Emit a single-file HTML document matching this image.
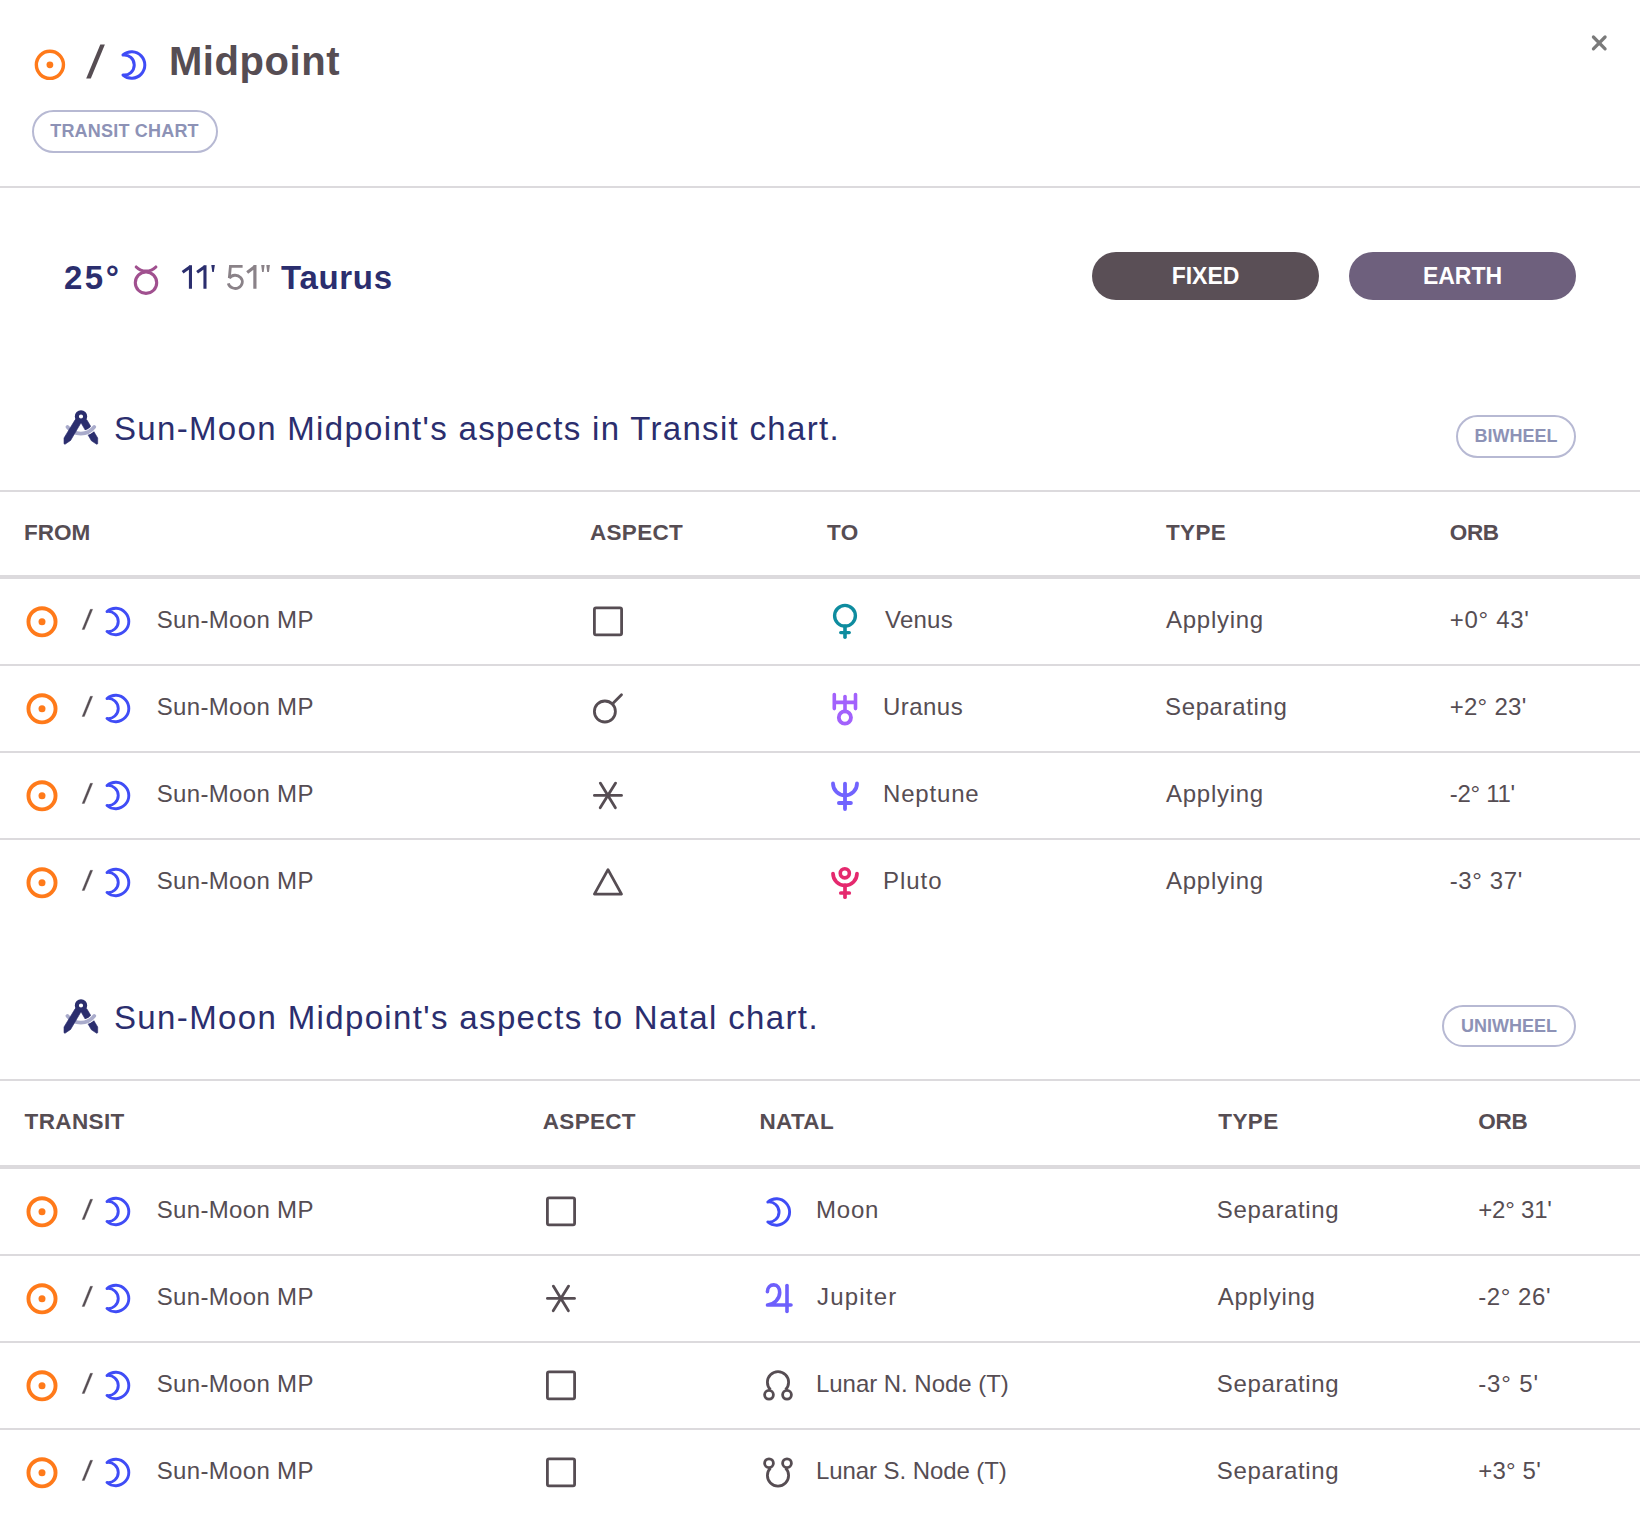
<!DOCTYPE html>
<html><head><meta charset="utf-8">
<style>
html,body{margin:0;padding:0;background:#fff;}
body{width:1640px;height:1516px;position:relative;overflow:hidden;font-family:"Liberation Sans",sans-serif;color:#564d53;}
.a{position:absolute;}
.hr{position:absolute;left:0;width:1640px;height:2px;background:#dcdadd;}
.hr4{position:absolute;left:0;width:1640px;height:4px;background:#dcdadd;}
.pill{position:absolute;box-sizing:border-box;border:2px solid #b7b9d3;border-radius:30px;color:#8d92b6;font-weight:bold;font-size:18px;text-align:center;}
.btn{position:absolute;border-radius:30px;color:#fff;font-weight:bold;font-size:23px;text-align:center;height:48px;line-height:48px;}
.th{position:absolute;font-weight:bold;font-size:22.5px;letter-spacing:0.2px;color:#564d53;white-space:nowrap;}
.td{position:absolute;font-size:24px;letter-spacing:0.3px;color:#564d53;white-space:nowrap;}
.h2{position:absolute;font-size:33px;letter-spacing:1.3px;color:#2b2e6e;white-space:nowrap;}
svg{position:absolute;overflow:visible;}
</style></head><body>

<!-- header -->
<svg class="a" style="left:0;top:0" width="400" height="100">
  <circle cx="49.9" cy="64.85" r="13.55" fill="none" stroke="#ff7a1a" stroke-width="3.4"/>
  <circle cx="49.9" cy="64.85" r="3.4" fill="#ff7a1a"/>
  <path d="M86.2,78.5 L90.8,78.5 L104.9,44.4 L100.3,44.4 Z" fill="#564d53"/>
  <path d="M123,55 A13.2,13.2 0 1 1 123,75 A10.07,10.07 0 1 0 123,55 Z" fill="none" stroke="#3f4cf6" stroke-width="3" stroke-linejoin="round"/>
</svg>
<div class="a" style="left:169px;top:35px;font-size:40px;font-weight:bold;color:#564d53;line-height:52px;letter-spacing:0.55px">Midpoint</div>
<div class="pill" style="left:32px;top:110px;width:186px;height:43px;line-height:39px;letter-spacing:0.2px;text-indent:-1px">TRANSIT CHART</div>
<svg class="a" style="left:1590px;top:34px" width="20" height="20">
  <path d="M3.4,3 L15.1,14.8 M15.1,3 L3.4,14.8" stroke="#7a7a7a" stroke-width="3.2" stroke-linecap="round"/>
</svg>
<div class="hr" style="top:186px"></div>

<!-- position line -->
<div class="a" style="left:64px;top:261px;font-size:33px;line-height:34px;color:#2b2e6e;white-space:nowrap;font-weight:bold;letter-spacing:2.5px">25°</div>
<svg class="a" style="left:0;top:0" width="300" height="300">
  <g fill="none" stroke="#2b2e6e" stroke-width="3.1">
    <path d="M190.45,265.2 V288.75 M191,266.2 L182.6,272.3"/>
    <path d="M204.97,265.2 V288.75 M205.5,266.2 L197.1,272.3"/>
  </g>
  <path d="M211.3,265 L214.85,265 L213.8,272 L212.3,272 Z" fill="#2b2e6e"/>
  <g fill="none" stroke="#8a8288" stroke-width="2.8">
    <path d="M242.6,266.4 L230.4,266.4 L229.3,278.2"/>
    <path d="M229.3,278.2 A7.1,6.6 0 1 1 228.3,283.3"/>
    <path d="M254.9,265.1 V288.8 M255.4,266.3 L247.2,272.6" stroke-width="3.2"/>
  </g>
  <path d="M261.2,265 L264.6,265 L263.7,271.9 L262.1,271.9 Z M266.3,265 L269.9,265 L269,271.9 L267.2,271.9 Z" fill="#8a8288"/>
</svg>
<div class="a" style="left:281px;top:261px;font-size:33px;line-height:34px;color:#2b2e6e;white-space:nowrap;font-weight:bold;letter-spacing:0.7px">Taurus</div>
<svg class="a" style="left:130px;top:262px" width="34" height="36">
  <circle cx="16" cy="20.7" r="10.7" fill="none" stroke="#a0508f" stroke-width="3.1"/>
  <path d="M6.2,5 A13.8,13.8 0 0 0 25.9,5" fill="none" stroke="#a0508f" stroke-width="3.1" stroke-linecap="round"/>
</svg>
<div class="btn" style="left:1092px;top:252px;width:227px;background:#5a4f56;">FIXED</div>
<div class="btn" style="left:1349px;top:252px;width:227px;background:#6e607d;">EARTH</div>

<svg style="left:50px;top:400px" width="60" height="60"><path d="M25.1,19.8 L31,19.6 L36.8,19.8 L47.7,38 L47.7,43.8 L46.7,44.3 L41.4,40.8 L31,22.8 Z" fill="#2b2e6e" stroke="#2b2e6e" stroke-width="0.6" stroke-linejoin="round"/><path d="M17.4,26.9 A16.85,16.85 0 0 0 44.3,26.9" fill="none" stroke="#fff" stroke-width="5.6" stroke-linecap="round"/><path d="M17.4,26.9 A16.85,16.85 0 0 0 44.3,26.9" fill="none" stroke="#a9abcb" stroke-width="3.7" stroke-linecap="round"/><path d="M25.1,19.8 L31,19.6 L31,22.8 L20.6,40.4 L15,44.3 L14,43.8 L14,38 Z" fill="#2b2e6e" stroke="#2b2e6e" stroke-width="0.6" stroke-linejoin="round"/><circle cx="31" cy="16.5" r="4.15" fill="none" stroke="#2b2e6e" stroke-width="4.1"/></svg>
<div class="h2" style="left:114px;top:409px;line-height:40px;letter-spacing:1.32px">Sun-Moon Midpoint's aspects in Transit chart.</div>
<div class="pill" style="left:1456px;top:415px;width:120px;height:43px;line-height:39px">BIWHEEL</div>
<div class="hr" style="top:490px"></div>
<div class="th" style="left:24.0px;top:520px;line-height:26px;letter-spacing:0.0px">FROM</div>
<div class="th" style="left:590.0px;top:520px;line-height:26px;letter-spacing:0.3px">ASPECT</div>
<div class="th" style="left:827.1px;top:520px;line-height:26px;letter-spacing:0.2px">TO</div>
<div class="th" style="left:1165.9px;top:520px;line-height:26px;letter-spacing:0.37px">TYPE</div>
<div class="th" style="left:1449.7px;top:520px;line-height:26px;letter-spacing:-0.3px">ORB</div>
<div class="hr4" style="top:575px"></div>
<svg style="left:0;top:601px" width="150" height="40">
  <circle cx="42" cy="20.8" r="13.55" fill="none" stroke="#ff7a1a" stroke-width="3.9"/>
  <circle cx="42" cy="20.8" r="3.5" fill="#ff7a1a"/>
  <path d="M82.1,28.5 L84.4,28.5 L92.7,8.3 L90.3,8.3 Z" fill="#564d53" stroke="#564d53" stroke-width="0.3" stroke-linejoin="round"/>
  <path d="M107.00,10.50 A13.2,13.2 0 1 1 107.00,30.50 A10.07,10.07 0 1 0 107.00,10.50 Z" fill="none" stroke="#3f4cf6" stroke-width="2.9" stroke-linejoin="round"/>
</svg><div class="td" style="left:156.7px;top:606px;line-height:28px;letter-spacing:0.33px">Sun-Moon MP</div>
<svg style="left:593px;top:606px" width="31" height="31"><rect x="1.4" y="1.9" width="27.2" height="27" rx="1.6" fill="none" stroke="#564d53" stroke-width="2.8"/></svg>
<svg style="left:825px;top:601px" width="40" height="40"><circle cx="20" cy="14.8" r="10.4" fill="none" stroke="#0e8c9f" stroke-width="3.4"/><line x1="20" y1="25" x2="20" y2="36.2" stroke="#0e8c9f" stroke-width="3.6" stroke-linecap="round"/><line x1="15.7" y1="31.6" x2="24.3" y2="31.6" stroke="#0e8c9f" stroke-width="3.3" stroke-linecap="round"/></svg>
<div class="td" style="left:885.0px;top:606px;line-height:28px;letter-spacing:0.23px">Venus</div>
<div class="td" style="left:1166.0px;top:606px;line-height:28px;letter-spacing:0.73px">Applying</div>
<div class="td" style="left:1449.7px;top:606px;line-height:28px;letter-spacing:0.72px">+0° 43'</div>
<div class="hr" style="top:664px"></div>
<svg style="left:0;top:688px" width="150" height="40">
  <circle cx="42" cy="20.8" r="13.55" fill="none" stroke="#ff7a1a" stroke-width="3.9"/>
  <circle cx="42" cy="20.8" r="3.5" fill="#ff7a1a"/>
  <path d="M82.1,28.5 L84.4,28.5 L92.7,8.3 L90.3,8.3 Z" fill="#564d53" stroke="#564d53" stroke-width="0.3" stroke-linejoin="round"/>
  <path d="M107.00,10.50 A13.2,13.2 0 1 1 107.00,30.50 A10.07,10.07 0 1 0 107.00,10.50 Z" fill="none" stroke="#3f4cf6" stroke-width="2.9" stroke-linejoin="round"/>
</svg><div class="td" style="left:156.7px;top:693px;line-height:28px;letter-spacing:0.33px">Sun-Moon MP</div>
<svg style="left:593px;top:693px" width="31" height="31"><circle cx="11.9" cy="18.5" r="10.5" fill="none" stroke="#564d53" stroke-width="2.8"/><line x1="19.3" y1="11.1" x2="28.5" y2="1.8" stroke="#564d53" stroke-width="2.8" stroke-linecap="round"/></svg>
<svg style="left:825px;top:688px" width="40" height="40"><path d="M9.3,6.5 V20.6 M30.5,6.5 V20.6 M9.3,14.4 H30.5" fill="none" stroke="#a261fc" stroke-width="3.6" stroke-linecap="round"/><line x1="20" y1="8.6" x2="20" y2="23.5" stroke="#a261fc" stroke-width="3.6" stroke-linecap="round"/><circle cx="19.9" cy="29.5" r="6.07" fill="none" stroke="#a261fc" stroke-width="3.85"/></svg>
<div class="td" style="left:883.0px;top:693px;line-height:28px;letter-spacing:0.46px">Uranus</div>
<div class="td" style="left:1165.0px;top:693px;line-height:28px;letter-spacing:0.64px">Separating</div>
<div class="td" style="left:1449.7px;top:693px;line-height:28px;letter-spacing:0.28px">+2° 23'</div>
<div class="hr" style="top:751px"></div>
<svg style="left:0;top:775px" width="150" height="40">
  <circle cx="42" cy="20.8" r="13.55" fill="none" stroke="#ff7a1a" stroke-width="3.9"/>
  <circle cx="42" cy="20.8" r="3.5" fill="#ff7a1a"/>
  <path d="M82.1,28.5 L84.4,28.5 L92.7,8.3 L90.3,8.3 Z" fill="#564d53" stroke="#564d53" stroke-width="0.3" stroke-linejoin="round"/>
  <path d="M107.00,10.50 A13.2,13.2 0 1 1 107.00,30.50 A10.07,10.07 0 1 0 107.00,10.50 Z" fill="none" stroke="#3f4cf6" stroke-width="2.9" stroke-linejoin="round"/>
</svg><div class="td" style="left:156.7px;top:780px;line-height:28px;letter-spacing:0.33px">Sun-Moon MP</div>
<svg style="left:593px;top:780px" width="31" height="31"><line x1="1.4" y1="15.4" x2="28.5" y2="15.4" stroke="#564d53" stroke-width="2.8" stroke-linecap="round"/><line x1="7.3" y1="3.1" x2="22.4" y2="27.7" stroke="#564d53" stroke-width="2.8" stroke-linecap="round"/><line x1="22.6" y1="3.1" x2="7.2" y2="27.8" stroke="#564d53" stroke-width="2.8" stroke-linecap="round"/></svg>
<svg style="left:825px;top:775px" width="40" height="40"><path d="M8,8.4 A12,12 0 0 0 32,8.4" fill="none" stroke="#7163fe" stroke-width="3.8" stroke-linecap="round"/><line x1="20" y1="8.6" x2="20" y2="34" stroke="#7163fe" stroke-width="3.8" stroke-linecap="round"/><line x1="13.9" y1="28" x2="25.9" y2="28" stroke="#7163fe" stroke-width="3.8" stroke-linecap="round"/></svg>
<div class="td" style="left:883.0px;top:780px;line-height:28px;letter-spacing:0.83px">Neptune</div>
<div class="td" style="left:1166.0px;top:780px;line-height:28px;letter-spacing:0.73px">Applying</div>
<div class="td" style="left:1449.7px;top:780px;line-height:28px;letter-spacing:-0.28px">-2° 11'</div>
<div class="hr" style="top:838px"></div>
<svg style="left:0;top:862px" width="150" height="40">
  <circle cx="42" cy="20.8" r="13.55" fill="none" stroke="#ff7a1a" stroke-width="3.9"/>
  <circle cx="42" cy="20.8" r="3.5" fill="#ff7a1a"/>
  <path d="M82.1,28.5 L84.4,28.5 L92.7,8.3 L90.3,8.3 Z" fill="#564d53" stroke="#564d53" stroke-width="0.3" stroke-linejoin="round"/>
  <path d="M107.00,10.50 A13.2,13.2 0 1 1 107.00,30.50 A10.07,10.07 0 1 0 107.00,10.50 Z" fill="none" stroke="#3f4cf6" stroke-width="2.9" stroke-linejoin="round"/>
</svg><div class="td" style="left:156.7px;top:867px;line-height:28px;letter-spacing:0.33px">Sun-Moon MP</div>
<svg style="left:593px;top:867px" width="31" height="31"><path d="M15,2.6 L28.5,27.1 L1.4,27.1 Z" fill="none" stroke="#564d53" stroke-width="2.8" stroke-linejoin="round"/></svg>
<svg style="left:825px;top:862px" width="40" height="40"><circle cx="19.8" cy="11.3" r="4.55" fill="none" stroke="#e5296e" stroke-width="3.6"/><path d="M8,11.5 A12,12 0 0 0 32,11.5" fill="none" stroke="#e5296e" stroke-width="3.7" stroke-linecap="round"/><line x1="20" y1="23" x2="20" y2="35.2" stroke="#e5296e" stroke-width="3.7" stroke-linecap="round"/><line x1="15.8" y1="31" x2="24.3" y2="31" stroke="#e5296e" stroke-width="3.7" stroke-linecap="round"/></svg>
<div class="td" style="left:883.0px;top:867px;line-height:28px;letter-spacing:0.95px">Pluto</div>
<div class="td" style="left:1166.0px;top:867px;line-height:28px;letter-spacing:0.73px">Applying</div>
<div class="td" style="left:1449.7px;top:867px;line-height:28px;letter-spacing:0.63px">-3° 37'</div>
<svg style="left:50px;top:989px" width="60" height="60"><path d="M25.1,19.8 L31,19.6 L36.8,19.8 L47.7,38 L47.7,43.8 L46.7,44.3 L41.4,40.8 L31,22.8 Z" fill="#2b2e6e" stroke="#2b2e6e" stroke-width="0.6" stroke-linejoin="round"/><path d="M17.4,26.9 A16.85,16.85 0 0 0 44.3,26.9" fill="none" stroke="#fff" stroke-width="5.6" stroke-linecap="round"/><path d="M17.4,26.9 A16.85,16.85 0 0 0 44.3,26.9" fill="none" stroke="#a9abcb" stroke-width="3.7" stroke-linecap="round"/><path d="M25.1,19.8 L31,19.6 L31,22.8 L20.6,40.4 L15,44.3 L14,43.8 L14,38 Z" fill="#2b2e6e" stroke="#2b2e6e" stroke-width="0.6" stroke-linejoin="round"/><circle cx="31" cy="16.5" r="4.15" fill="none" stroke="#2b2e6e" stroke-width="4.1"/></svg>
<div class="h2" style="left:114px;top:998px;line-height:40px;letter-spacing:1.36px">Sun-Moon Midpoint's aspects to Natal chart.</div>
<div class="pill" style="left:1442px;top:1005px;width:134px;height:42px;line-height:38px">UNIWHEEL</div>
<div class="hr" style="top:1079px"></div>
<div class="th" style="left:24.6px;top:1109px;line-height:26px;letter-spacing:0.37px">TRANSIT</div>
<div class="th" style="left:542.8px;top:1109px;line-height:26px;letter-spacing:0.3px">ASPECT</div>
<div class="th" style="left:759.4px;top:1109px;line-height:26px;letter-spacing:0.35px">NATAL</div>
<div class="th" style="left:1218.3px;top:1109px;line-height:26px;letter-spacing:0.37px">TYPE</div>
<div class="th" style="left:1478.3px;top:1109px;line-height:26px;letter-spacing:-0.3px">ORB</div>
<div class="hr4" style="top:1165px"></div>
<svg style="left:0;top:1191px" width="150" height="40">
  <circle cx="42" cy="20.8" r="13.55" fill="none" stroke="#ff7a1a" stroke-width="3.9"/>
  <circle cx="42" cy="20.8" r="3.5" fill="#ff7a1a"/>
  <path d="M82.1,28.5 L84.4,28.5 L92.7,8.3 L90.3,8.3 Z" fill="#564d53" stroke="#564d53" stroke-width="0.3" stroke-linejoin="round"/>
  <path d="M107.00,10.50 A13.2,13.2 0 1 1 107.00,30.50 A10.07,10.07 0 1 0 107.00,10.50 Z" fill="none" stroke="#3f4cf6" stroke-width="2.9" stroke-linejoin="round"/>
</svg><div class="td" style="left:156.7px;top:1196px;line-height:28px;letter-spacing:0.33px">Sun-Moon MP</div>
<svg style="left:546px;top:1196px" width="31" height="31"><rect x="1.4" y="1.9" width="27.2" height="27" rx="1.6" fill="none" stroke="#564d53" stroke-width="2.8"/></svg>
<svg style="left:758px;top:1191px" width="40" height="40"><path d="M9.80,11.00 A13.2,13.2 0 1 1 9.80,31.00 A10.07,10.07 0 1 0 9.80,11.00 Z" fill="none" stroke="#3f4cf6" stroke-width="2.9" stroke-linejoin="round"/></svg>
<div class="td" style="left:816.0px;top:1196px;line-height:28px;letter-spacing:0.77px">Moon</div>
<div class="td" style="left:1216.8px;top:1196px;line-height:28px;letter-spacing:0.64px">Separating</div>
<div class="td" style="left:1478.2px;top:1196px;line-height:28px;letter-spacing:-0.2px">+2° 31'</div>
<div class="hr" style="top:1254px"></div>
<svg style="left:0;top:1278px" width="150" height="40">
  <circle cx="42" cy="20.8" r="13.55" fill="none" stroke="#ff7a1a" stroke-width="3.9"/>
  <circle cx="42" cy="20.8" r="3.5" fill="#ff7a1a"/>
  <path d="M82.1,28.5 L84.4,28.5 L92.7,8.3 L90.3,8.3 Z" fill="#564d53" stroke="#564d53" stroke-width="0.3" stroke-linejoin="round"/>
  <path d="M107.00,10.50 A13.2,13.2 0 1 1 107.00,30.50 A10.07,10.07 0 1 0 107.00,10.50 Z" fill="none" stroke="#3f4cf6" stroke-width="2.9" stroke-linejoin="round"/>
</svg><div class="td" style="left:156.7px;top:1283px;line-height:28px;letter-spacing:0.33px">Sun-Moon MP</div>
<svg style="left:546px;top:1283px" width="31" height="31"><line x1="1.4" y1="15.4" x2="28.5" y2="15.4" stroke="#564d53" stroke-width="2.8" stroke-linecap="round"/><line x1="7.3" y1="3.1" x2="22.4" y2="27.7" stroke="#564d53" stroke-width="2.8" stroke-linecap="round"/><line x1="22.6" y1="3.1" x2="7.2" y2="27.8" stroke="#564d53" stroke-width="2.8" stroke-linecap="round"/></svg>
<svg style="left:758px;top:1278px" width="40" height="40"><g transform="translate(1,0)"><path d="M8.4,13.8 C8.4,9.5 11.3,6.9 14.8,6.9 C18.5,6.9 20.7,10 20.7,14.5 C20.7,21 15,26.5 8.5,27 L32,27" fill="none" stroke="#6d5ffc" stroke-width="3.6" stroke-linecap="round" stroke-linejoin="round"/><line x1="28" y1="7.5" x2="28" y2="33.5" stroke="#6d5ffc" stroke-width="3.6" stroke-linecap="round"/></g></svg>
<div class="td" style="left:817.0px;top:1283px;line-height:28px;letter-spacing:1.2px">Jupiter</div>
<div class="td" style="left:1217.8px;top:1283px;line-height:28px;letter-spacing:0.73px">Applying</div>
<div class="td" style="left:1478.2px;top:1283px;line-height:28px;letter-spacing:0.57px">-2° 26'</div>
<div class="hr" style="top:1341px"></div>
<svg style="left:0;top:1365px" width="150" height="40">
  <circle cx="42" cy="20.8" r="13.55" fill="none" stroke="#ff7a1a" stroke-width="3.9"/>
  <circle cx="42" cy="20.8" r="3.5" fill="#ff7a1a"/>
  <path d="M82.1,28.5 L84.4,28.5 L92.7,8.3 L90.3,8.3 Z" fill="#564d53" stroke="#564d53" stroke-width="0.3" stroke-linejoin="round"/>
  <path d="M107.00,10.50 A13.2,13.2 0 1 1 107.00,30.50 A10.07,10.07 0 1 0 107.00,10.50 Z" fill="none" stroke="#3f4cf6" stroke-width="2.9" stroke-linejoin="round"/>
</svg><div class="td" style="left:156.7px;top:1370px;line-height:28px;letter-spacing:0.33px">Sun-Moon MP</div>
<svg style="left:546px;top:1370px" width="31" height="31"><rect x="1.4" y="1.9" width="27.2" height="27" rx="1.6" fill="none" stroke="#564d53" stroke-width="2.8"/></svg>
<svg style="left:758px;top:1365px" width="40" height="40"><g transform="translate(1,0)"><path d="M11.5,24.8 A10.6,10.6 0 1 1 26.5,24.8" fill="none" stroke="#564d53" stroke-width="2.8"/><circle cx="10" cy="29.8" r="4.4" fill="none" stroke="#564d53" stroke-width="2.8"/><circle cx="28" cy="29.8" r="4.4" fill="none" stroke="#564d53" stroke-width="2.8"/></g></svg>
<div class="td" style="left:816.0px;top:1370px;line-height:28px;letter-spacing:-0.04px">Lunar N. Node (T)</div>
<div class="td" style="left:1216.8px;top:1370px;line-height:28px;letter-spacing:0.64px">Separating</div>
<div class="td" style="left:1478.2px;top:1370px;line-height:28px;letter-spacing:0.86px">-3° 5'</div>
<div class="hr" style="top:1428px"></div>
<svg style="left:0;top:1452px" width="150" height="40">
  <circle cx="42" cy="20.8" r="13.55" fill="none" stroke="#ff7a1a" stroke-width="3.9"/>
  <circle cx="42" cy="20.8" r="3.5" fill="#ff7a1a"/>
  <path d="M82.1,28.5 L84.4,28.5 L92.7,8.3 L90.3,8.3 Z" fill="#564d53" stroke="#564d53" stroke-width="0.3" stroke-linejoin="round"/>
  <path d="M107.00,10.50 A13.2,13.2 0 1 1 107.00,30.50 A10.07,10.07 0 1 0 107.00,10.50 Z" fill="none" stroke="#3f4cf6" stroke-width="2.9" stroke-linejoin="round"/>
</svg><div class="td" style="left:156.7px;top:1457px;line-height:28px;letter-spacing:0.33px">Sun-Moon MP</div>
<svg style="left:546px;top:1457px" width="31" height="31"><rect x="1.4" y="1.9" width="27.2" height="27" rx="1.6" fill="none" stroke="#564d53" stroke-width="2.8"/></svg>
<svg style="left:758px;top:1452px" width="40" height="40"><g transform="translate(1,0)"><path d="M11.5,16 A10.6,10.6 0 1 0 26.5,16" fill="none" stroke="#564d53" stroke-width="2.8"/><circle cx="10" cy="11.2" r="4.4" fill="none" stroke="#564d53" stroke-width="2.8"/><circle cx="28" cy="11.2" r="4.4" fill="none" stroke="#564d53" stroke-width="2.8"/></g></svg>
<div class="td" style="left:816.0px;top:1457px;line-height:28px;letter-spacing:-0.08px">Lunar S. Node (T)</div>
<div class="td" style="left:1216.8px;top:1457px;line-height:28px;letter-spacing:0.64px">Separating</div>
<div class="td" style="left:1478.2px;top:1457px;line-height:28px;letter-spacing:0.2px">+3° 5'</div>
</body></html>
